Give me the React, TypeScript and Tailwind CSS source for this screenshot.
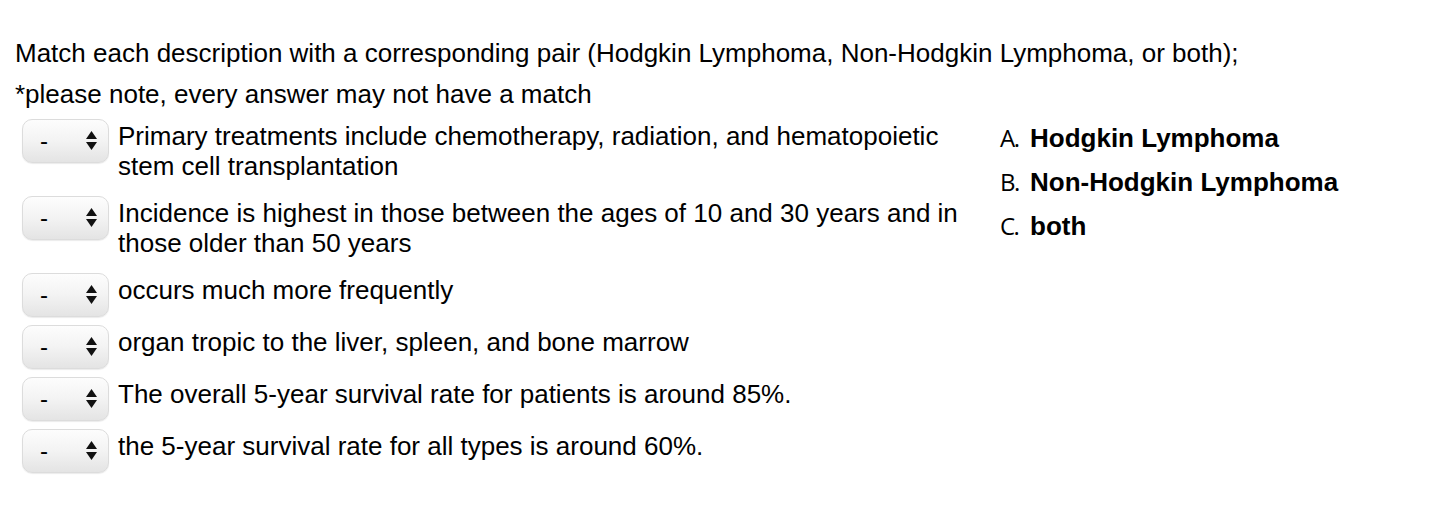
import React from "react";

const items = [
  "Primary treatments include chemotherapy, radiation, and hematopoietic stem cell transplantation",
  "Incidence is highest in those between the ages of 10 and 30 years and in those older than 50 years",
  "occurs much more frequently",
  "organ tropic to the liver, spleen, and bone marrow",
  "The overall 5-year survival rate for patients is around 85%.",
  "the 5-year survival rate for all types is around 60%.",
];

const choices = [
  { letter: "A.", label: "Hodgkin Lymphoma" },
  { letter: "B.", label: "Non-Hodgkin Lymphoma" },
  { letter: "C.", label: "both" },
];

function FakeSelect() {
  return (
    <div className="relative flex h-[44px] w-[87px] shrink-0 items-center rounded-[10px] border border-[#dcdcdc] bg-gradient-to-b from-[#fdfdfd] via-[#f3f3f3] to-[#e4e4e4] shadow-[0_1px_1px_rgba(0,0,0,0.08)]">
      <span className="pl-[17px] text-[24px] leading-none text-black">-</span>
      <svg
        className="absolute left-[63px] top-1/2 -translate-y-1/2"
        width="11"
        height="20"
        viewBox="0 0 11 20"
      >
        <polygon points="5.5,0 11,8 0,8" fill="#111" />
        <polygon points="0,11 11,11 5.5,19" fill="#111" />
      </svg>
    </div>
  );
}

export default function App() {
  return (
    <div className="min-h-[518px] w-[1456px] bg-white pt-[33px] pl-[15px] font-['Liberation_Sans',Arial,sans-serif] text-[26px] text-black">
      <p className="leading-[41px]">
        Match each description with a corresponding pair (Hodgkin Lymphoma, Non-Hodgkin Lymphoma, or both);
      </p>
      <p className="leading-[41px]">*please note, every answer may not have a match</p>

      <div className="flex">
        <div className="w-[960px] pl-[7px]">
          {items.map((text, i) => (
            <div key={i} className="flex items-start gap-[9px] py-[4px]">
              <FakeSelect />
              <p className="w-[850px] pb-[7px] pt-[2px] leading-[30px]">{text}</p>
            </div>
          ))}
        </div>

        <div className="ml-[25px] pt-[1px]">
          {choices.map((c) => (
            <div key={c.letter} className="flex items-baseline leading-[44px]">
              <span className="w-[30px] font-['Open_Sans',sans-serif] text-[24px] tracking-[-1.5px]">
                {c.letter}
              </span>
              <span className="font-bold">{c.label}</span>
            </div>
          ))}
        </div>
      </div>
    </div>
  );
}
